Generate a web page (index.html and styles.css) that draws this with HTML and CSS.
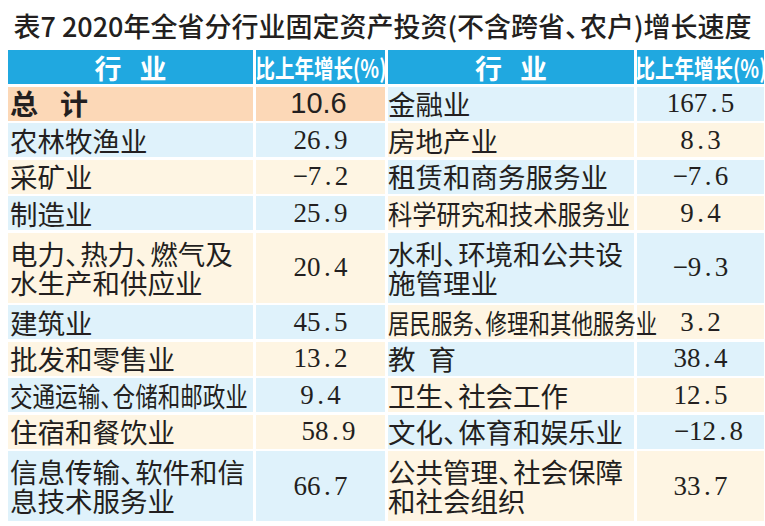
FILE: index.html
```html
<!DOCTYPE html>
<html lang="zh">
<head>
<meta charset="utf-8">
<link rel="stylesheet" href="styles.css">
</head>
<body>
<div class="page">
  <h1 class="title"><span class="title-in">表7 2020年全省分行业固定资产投资(不含跨省<span class="dun">、</span>农户)增长速度</span></h1>
  <div class="table">
    <div class="th name"><span><span class="sp">行</span>业</span></div>
    <div class="th pct"><span class="pct-in">比上年增长(%)</span></div>
    <div class="th name"><span><span class="sp">行</span>业</span></div>
    <div class="th pct"><span class="pct-in">比上年增长(%)</span></div>

    <div class="td total lc"><span><span class="tsp">总</span>计</span></div>
    <div class="td total tnum"><span>10.6</span></div>
    <div class="td blue rc"><span>金融业</span></div>
    <div class="td blue num"><span>167<span class="pt">.</span>5</span></div>

    <div class="td blue lc"><span>农林牧渔业</span></div>
    <div class="td blue num"><span>26<span class="pt">.</span>9</span></div>
    <div class="td cream rc"><span>房地产业</span></div>
    <div class="td cream num"><span>8<span class="pt">.</span>3</span></div>

    <div class="td cream lc"><span>采矿业</span></div>
    <div class="td cream num"><span>−7<span class="pt">.</span>2</span></div>
    <div class="td blue rc"><span>租赁和商务服务业</span></div>
    <div class="td blue num"><span>−7<span class="pt">.</span>6</span></div>

    <div class="td blue lc"><span>制造业</span></div>
    <div class="td blue num"><span>25<span class="pt">.</span>9</span></div>
    <div class="td cream rc"><span class="cond c88">科学研究和技术服务业</span></div>
    <div class="td cream num"><span>9<span class="pt">.</span>4</span></div>

    <div class="td cream lc"><span class="two">电力<span class="dun">、</span>热力<span class="dun">、</span>燃气及<br>水生产和供应业</span></div>
    <div class="td cream num"><span>20<span class="pt">.</span>4</span></div>
    <div class="td blue rc"><span class="two">水利<span class="dun">、</span>环境和公共设<br>施管理业</span></div>
    <div class="td blue num"><span>−9<span class="pt">.</span>3</span></div>

    <div class="td blue lc"><span>建筑业</span></div>
    <div class="td blue num"><span>45<span class="pt">.</span>5</span></div>
    <div class="td cream rc"><span class="cond c78">居民服务<span class="dun">、</span>修理和其他服务业</span></div>
    <div class="td cream num"><span>3<span class="pt">.</span>2</span></div>

    <div class="td cream lc"><span>批发和零售业</span></div>
    <div class="td cream num"><span>13<span class="pt">.</span>2</span></div>
    <div class="td blue rc"><span>教<span class="en"></span>育</span></div>
    <div class="td blue num"><span>38<span class="pt">.</span>4</span></div>

    <div class="td blue lc"><span class="cond c82">交通运输<span class="dun">、</span>仓储和邮政业</span></div>
    <div class="td blue num"><span>9<span class="pt">.</span>4</span></div>
    <div class="td cream rc"><span>卫生<span class="dun">、</span>社会工作</span></div>
    <div class="td cream num"><span>12<span class="pt">.</span>5</span></div>

    <div class="td cream lc"><span>住宿和餐饮业</span></div>
    <div class="td cream num nudge"><span>58<span class="pt">.</span>9</span></div>
    <div class="td blue rc"><span>文化<span class="dun">、</span>体育和娱乐业</span></div>
    <div class="td blue num nudge"><span>−12<span class="pt">.</span>8</span></div>

    <div class="td blue lc"><span class="two">信息传输<span class="dun">、</span>软件和信<br>息技术服务业</span></div>
    <div class="td blue num"><span>66<span class="pt">.</span>7</span></div>
    <div class="td cream rc"><span class="two">公共管理<span class="dun">、</span>社会保障<br>和社会组织</span></div>
    <div class="td cream num"><span>33<span class="pt">.</span>7</span></div>
  </div>
</div>
</body>
</html>
```

FILE: styles.css
```css
* { box-sizing: border-box; }
html, body {
  margin: 0;
  padding: 0;
  background: #ffffff;
}
body {
  font-family: "Noto Sans CJK SC", "Noto Sans", sans-serif;
  color: #231f20;
  width: 765px;
  height: 526px;
  overflow: hidden;
}
.title {
  margin: 0;
  height: 50px;
  display: flex;
  align-items: center;
  justify-content: center;
  font-size: 27px;
  font-weight: 500;
  line-height: 1;
  white-space: nowrap;
}
.title-in {
  display: inline-block;
  flex-shrink: 0;
}
.dun {
  letter-spacing: -0.45em;
}
.table {
  display: grid;
  grid-template-columns: 245px 129px 246px 127px;
  grid-template-rows: 34px repeat(4, 34px) 70px repeat(4, 34px) 70px;
  gap: 2.5px 3px;
  margin-left: 8px;
}
.th {
  background: #20a8e0;
  color: #ffffff;
  display: flex;
  align-items: center;
  justify-content: center;
  font-weight: 700;
  white-space: nowrap;
}
.th.name {
  font-size: 27px;
}
.sp {
  margin-right: 18px;
}
.th.pct {
  font-size: 25px;
}
.pct-in {
  display: inline-block;
  flex-shrink: 0;
  transform: scaleX(0.78);
}
.td {
  display: flex;
  align-items: center;
  font-size: 27.5px;
  line-height: 1.04;
  white-space: nowrap;
}
.td > span {
  flex-shrink: 0;
}
.blue { background: #dff2fb; }
.cream { background: #fef5e3; }
.total { background: #fcd8b7; }
.lc { padding-left: 2px; }
.rc { padding-left: 0; }
.td.total.lc {
  font-size: 28px;
  font-weight: 700;
}
.tsp {
  margin-right: 22px;
}
.tnum {
  justify-content: center;
  font-family: "Liberation Sans", Arial, sans-serif;
  font-size: 29px;
  padding-right: 4px;
}
.num {
  justify-content: center;
  font-family: "Liberation Serif", "Times New Roman", serif;
  font-size: 27px;
}
.pt {
  display: inline-block;
  width: 0.5em;
  text-align: center;
}
.nudge {
  padding-left: 16px;
}
.en {
  display: inline-block;
  width: 13px;
}
.cond {
  display: inline-block;
  transform-origin: left center;
}
.c88 { transform: scaleX(0.88); }
.c82 { transform: scaleX(0.82); }
.c78 { transform: scaleX(0.78); }
.two {
  display: block;
}
```
